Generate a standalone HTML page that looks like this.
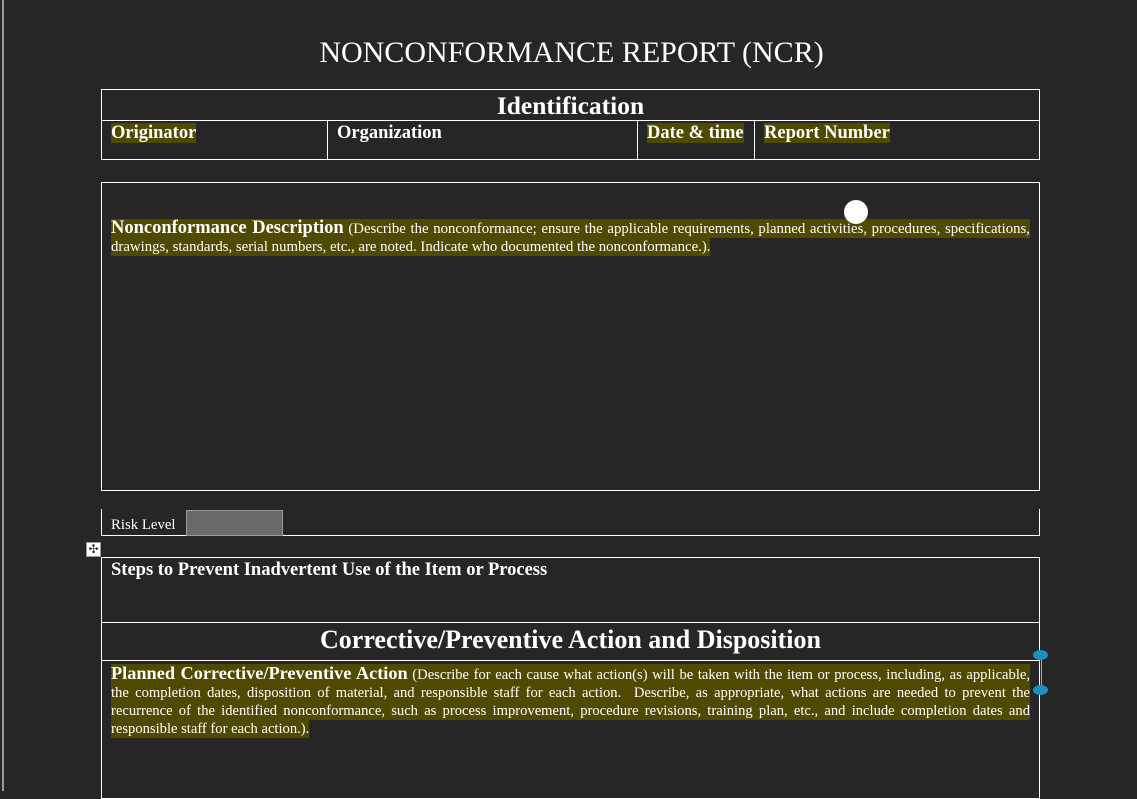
<!DOCTYPE html>
<html><head><meta charset="utf-8"><style>
body{margin:0;width:1137px;height:791px;background:#262626;overflow:hidden;position:relative;font-family:"Liberation Serif",serif;color:#fff}
.a{position:absolute}
.l{position:absolute;background:#fff}
.h{background:#4f4a00}
.b{font-weight:bold;font-size:18.5px}
.p{font-size:14.8px;line-height:18px}
.j{text-align:justify;text-align-last:justify;background:#4f4a00;white-space:nowrap}
.k{display:inline-block;background:#4f4a00}
</style></head><body>
<div class="a" style="left:2px;top:0;width:2px;height:791px;background:#9a9a9a"></div>
<div class="a" style="left:0;width:1137px;top:36px;text-align:center;font-size:30px;padding-left:3px">NONCONFORMANCE REPORT (NCR)</div>
<div class="a" style="left:101px;top:89px;width:937px;height:69px;border:1px solid #fff"></div>
<div class="l" style="left:101px;top:120px;width:939px;height:1px"></div>
<div class="l" style="left:327px;top:120px;width:1px;height:39px"></div>
<div class="l" style="left:637px;top:120px;width:1px;height:39px"></div>
<div class="l" style="left:754px;top:120px;width:1px;height:39px"></div>
<div class="a" style="left:101px;width:939px;top:91px;text-align:center;font-size:25.5px;font-weight:bold">Identification</div>
<div class="a b" style="left:111px;top:123px"><span class="h">Originator</span></div>
<div class="a b" style="left:337px;top:123px">Organization</div>
<div class="a b" style="left:647px;top:123px"><span class="h">Date &amp; time</span></div>
<div class="a b" style="left:764px;top:123px"><span class="h">Report Number</span></div>
<div class="a" style="left:101px;top:182px;width:937px;height:307px;border:1px solid #fff"></div>
<div class="a p" style="left:111px;top:219px;width:919px">
<div class="j"><b style="font-size:18.5px">Nonconformance Description</b> (Describe the nonconformance; ensure the applicable requirements, planned activities, procedures, specifications,</div>
<div class="k">drawings, standards, serial numbers, etc., are noted. Indicate who documented the nonconformance.).</div>
</div>
<div class="a" style="left:844px;top:200px;width:24px;height:24px;border-radius:50%;background:#fff"></div>
<div class="l" style="left:101px;top:509px;width:1px;height:27px"></div>
<div class="l" style="left:1039px;top:509px;width:1px;height:27px"></div>
<div class="l" style="left:101px;top:535px;width:939px;height:1px"></div>
<div class="a" style="left:111px;top:517px;font-size:14.8px">Risk Level</div>
<div class="a" style="left:186px;top:510px;width:95px;height:24px;background:#696969;border:1px solid #9a9a9a"></div>
<div class="a" style="left:86px;top:542px;width:13px;height:13px;background:#fff;border:1px solid #999;color:#333;font-size:12px;line-height:13px;text-align:center">✣</div>
<div class="a" style="left:101px;top:557px;width:937px;height:240px;border:1px solid #fff"></div>
<div class="l" style="left:101px;top:622px;width:939px;height:1px"></div>
<div class="l" style="left:101px;top:660px;width:939px;height:1px"></div>
<div class="a b" style="left:111px;top:560px">Steps to Prevent Inadvertent Use of the Item or Process</div>
<div class="a" style="left:101px;width:939px;top:625px;text-align:center;font-size:26px;font-weight:bold">Corrective/Preventive Action and Disposition</div>
<div class="a p" style="left:111px;top:664px;width:919px;font-size:14.6px;line-height:18px">
<div class="j"><b style="font-size:18.3px">Planned Corrective/Preventive Action</b> (Describe for each cause what action(s) will be taken with the item or process, including, as applicable,</div>
<div class="j">the completion dates, disposition of material, and responsible staff for each action.&nbsp; Describe, as appropriate, what actions are needed to prevent the</div>
<div class="j">recurrence of the identified nonconformance, such as process improvement, procedure revisions, training plan, etc., and include completion dates and</div>
<div class="k">responsible staff for each action.).</div>
</div>
<div class="a" style="left:1041px;top:656px;width:1px;height:34px;background:#aaa"></div>
<div class="a" style="left:1033px;top:650px;width:15px;height:10px;border-radius:50%;background:#1a8fc4"></div>
<div class="a" style="left:1033px;top:685px;width:15px;height:10px;border-radius:50%;background:#1a8fc4"></div>
</body></html>
